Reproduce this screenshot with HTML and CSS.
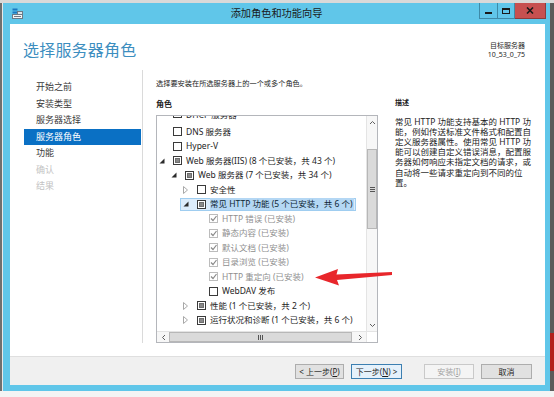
FILE: index.html
```html
<!DOCTYPE html>
<html lang="zh-CN">
<head>
<meta charset="utf-8">
<title>添加角色和功能向导</title>
<link rel="stylesheet" href="styles.css">
</head>
<body>
<div class="desktop">
  <div class="topstrip"></div>
  <div class="winrow">
    <div class="leftedge"></div>
    <div class="window">
      <div class="titlebar">
        <div class="appicon">
          <svg width="11" height="11" viewBox="0 0 11 11">
            <rect x="0.5" y="0.5" width="5" height="2" fill="#1c78c0"/>
            <rect x="0.5" y="3.5" width="5" height="2" fill="#1c78c0"/>
            <rect x="0.5" y="6.5" width="10" height="4" fill="#f4f4f4" stroke="#6b7a86"/>
            <rect x="5.5" y="3.5" width="5" height="3" fill="#e0e6ea" stroke="#6b7a86"/>
            <line x1="2" y1="8.5" x2="9" y2="8.5" stroke="#6b7a86"/>
          </svg>
        </div>
        <div class="wintitle">添加角色和功能向导</div>
        <div class="controls">
          <span class="ctl ctl-min"><svg width="7" height="3"><rect x="0" y="0" width="7" height="2" fill="#1a1a1a"/></svg></span>
          <span class="ctl ctl-max"><svg width="8" height="6"><rect x="0.5" y="0.5" width="7" height="5" fill="none" stroke="#1a1a1a"/><rect x="0" y="0" width="8" height="2" fill="#1a1a1a"/></svg></span>
          <span class="ctl ctl-close"><svg width="8" height="7"><path d="M1 0.5 L7 6.5 M7 0.5 L1 6.5" stroke="#1a1a1a" stroke-width="1.6"/></svg></span>
        </div>
      </div>
      <div class="client">
        <header class="head">
          <h1 class="pagetitle">选择服务器角色</h1>
          <div class="target">
            <div class="target-label">目标服务器</div>
            <div class="target-name">10_53_0_75</div>
          </div>
        </header>
        <div class="main">
          <nav class="steps">
            <div class="step">开始之前</div>
            <div class="step">安装类型</div>
            <div class="step">服务器选择</div>
            <div class="step active">服务器角色</div>
            <div class="step">功能</div>
            <div class="step disabled">确认</div>
            <div class="step disabled">结果</div>
          </nav>
          <section class="content">
            <div class="rolescol">
              <p class="instr">选择要安装在所选服务器上的一个或多个角色。</p>
              <h2 class="label">角色</h2>
              <div class="tree">
                <div class="treeview">
                  <div class="rows">
                    <div class="row l0"><span class="exp"></span><span class="cb"></span><span class="txt">DHCP 服务器</span></div>
                    <div class="row l0"><span class="exp"></span><span class="cb"></span><span class="txt">DNS 服务器</span></div>
                    <div class="row l0"><span class="exp"></span><span class="cb"></span><span class="txt">Hyper-V</span></div>
                    <div class="row l0"><span class="exp"><svg width="6" height="6"><path d="M5.5 0.5 V5.5 H0.5 Z" fill="#2b2b2b"/></svg></span><span class="cb partial"></span><span class="txt">Web 服务器(IIS) (8 个已安装，共 43 个)</span></div>
                    <div class="row l1"><span class="exp"><svg width="6" height="6"><path d="M5.5 0.5 V5.5 H0.5 Z" fill="#2b2b2b"/></svg></span><span class="cb partial"></span><span class="txt">Web 服务器 (7 个已安装，共 34 个)</span></div>
                    <div class="row l2"><span class="exp"><svg width="5" height="8"><path d="M0.5 0.5 L4.5 4 L0.5 7.5 Z" fill="none" stroke="#a8a8a8"/></svg></span><span class="cb"></span><span class="txt">安全性</span></div>
                    <div class="row l2"><span class="sel"><span class="exp"><svg width="6" height="6"><path d="M5.5 0.5 V5.5 H0.5 Z" fill="#2b2b2b"/></svg></span><span class="cb partial"></span><span class="txt seltxt">常见 HTTP 功能 (5 个已安装，共 6 个)</span></span></div>
                    <div class="row l3"><span class="exp"></span><span class="cb done"><svg width="7" height="7"><path d="M1 3.5 L3 5.5 L6.5 1" fill="none" stroke="#8a8a8a" stroke-width="1.2"/></svg></span><span class="txt inst">HTTP 错误 (已安装)</span></div>
                    <div class="row l3"><span class="exp"></span><span class="cb done"><svg width="7" height="7"><path d="M1 3.5 L3 5.5 L6.5 1" fill="none" stroke="#8a8a8a" stroke-width="1.2"/></svg></span><span class="txt inst">静态内容 (已安装)</span></div>
                    <div class="row l3"><span class="exp"></span><span class="cb done"><svg width="7" height="7"><path d="M1 3.5 L3 5.5 L6.5 1" fill="none" stroke="#8a8a8a" stroke-width="1.2"/></svg></span><span class="txt inst">默认文档 (已安装)</span></div>
                    <div class="row l3"><span class="exp"></span><span class="cb done"><svg width="7" height="7"><path d="M1 3.5 L3 5.5 L6.5 1" fill="none" stroke="#8a8a8a" stroke-width="1.2"/></svg></span><span class="txt inst">目录浏览 (已安装)</span></div>
                    <div class="row l3"><span class="exp"></span><span class="cb done"><svg width="7" height="7"><path d="M1 3.5 L3 5.5 L6.5 1" fill="none" stroke="#8a8a8a" stroke-width="1.2"/></svg></span><span class="txt inst">HTTP 重定向 (已安装)</span></div>
                    <div class="row l3"><span class="exp"></span><span class="cb"></span><span class="txt">WebDAV 发布</span></div>
                    <div class="row l2"><span class="exp"><svg width="5" height="8"><path d="M0.5 0.5 L4.5 4 L0.5 7.5 Z" fill="none" stroke="#a8a8a8"/></svg></span><span class="cb partial"></span><span class="txt">性能 (1 个已安装，共 2 个)</span></div>
                    <div class="row l2"><span class="exp"><svg width="5" height="8"><path d="M0.5 0.5 L4.5 4 L0.5 7.5 Z" fill="none" stroke="#a8a8a8"/></svg></span><span class="cb partial"></span><span class="txt">运行状况和诊断 (1 个已安装，共 6 个)</span></div>
                  </div>
                </div>
                <div class="vscroll">
                  <span class="sarrow"><svg width="7" height="5"><path d="M1 4 L3.5 1.5 L6 4" fill="none" stroke="#606060"/></svg></span>
                  <span class="vtrack-top"></span>
                  <span class="vthumb"><svg width="5" height="5"><path d="M0 0.5 H5 M0 2.5 H5 M0 4.5 H5" stroke="#555"/></svg></span>
                  <span class="vtrack-bot"></span>
                  <span class="sarrow"><svg width="7" height="5"><path d="M1 1 L3.5 3.5 L6 1" fill="none" stroke="#606060"/></svg></span>
                </div>
                <div class="hscroll">
                  <span class="harrow"><svg width="5" height="7"><path d="M4 1 L1.5 3.5 L4 6" fill="none" stroke="#606060"/></svg></span>
                  <span class="hthumb"><svg width="5" height="5"><path d="M0.5 0 V5 M2.5 0 V5 M4.5 0 V5" stroke="#555"/></svg></span>
                  <span class="harrow"><svg width="5" height="7"><path d="M1 1 L3.5 3.5 L1 6" fill="none" stroke="#606060"/></svg></span>
                </div>
                <div class="corner"></div>
              </div>
            </div>
            <aside class="desc">
              <h3 class="desc-title">描述</h3>
              <p class="desc-text">常见 HTTP 功能支持基本的 HTTP 功<br>能，例如传送标准文件格式和配置自<br>定义服务器属性。使用常见 HTTP 功<br>能可以创建自定义错误消息，配置服<br>务器如何响应未指定文档的请求，或<br>自动将一些请求重定向到不同的位<br>置。</p>
            </aside>
            <svg class="redarrow" width="80" height="22" viewBox="0 0 80 22">
              <path d="M2 12.5 L25 4 L23.5 9.6 L79 7 L79 10 L24 15 L26 20.5 Z" fill="#e8262b"/>
            </svg>
          </section>
        </div>
        <footer class="foot">
          <button class="btn w49">&lt; 上一步(<u>P</u>)</button>
          <button class="btn primary w51">下一步(<u>N</u>) &gt;</button>
          <button class="btn disabled install w50">安装(<u>I</u>)</button>
          <button class="btn w51">取消</button>
        </footer>
      </div>
    </div>
    <div class="rightedge"></div>
  </div>
</div>
</body>
</html>
```
FILE: styles.css
```css
* { box-sizing: border-box; }
html, body { margin: 0; padding: 0; }
body {
  width: 554px;
  height: 397px;
  overflow: hidden;
  background: #f4f4f4;
  font-family: "Noto Sans", "Noto Sans CJK SC", sans-serif;
  color: #1e1e1e;
}
.desktop { display: flex; flex-direction: column; height: 397px; }
.topstrip { height: 3px; flex: none; background: #d9d9d9; }
.winrow { display: flex; flex: none; }
.leftedge {
  width: 3px;
  background: linear-gradient(to right, #6f6f6f 0 2px, #e8e8e8 2px);
}
.rightedge {
  width: 4px;
  background: linear-gradient(to bottom, #5b5b5b 0 330px, #b3201c 330px 368px, #5b5b5b 368px);
}
.window {
  width: 547px;
  height: 388px;
  background: #60c6e9;
  display: flex;
  flex-direction: column;
}

/* title bar */
.titlebar {
  height: 21px;
  flex: none;
  display: grid;
  grid-template-columns: 1fr auto 1fr;
  align-items: start;
}
.appicon { padding: 5px 0 0 9px; height: 21px; }
.appicon svg { display: block; }
.wintitle {
  font-size: 10.2px;
  line-height: 21px;
  color: #1a1a1a;
  white-space: nowrap;
}
.controls {
  justify-self: end;
  margin-right: 4px;
  display: flex;
  height: 16px;
}
.ctl {
  height: 16px;
  display: flex;
  align-items: center;
  justify-content: center;
  border: 1px solid #3e8aa8;
  border-top: none;
}
.ctl-min { width: 18px; border-right: none; }
.ctl-min svg { margin-top: 5px; }
.ctl-max { width: 18px; }
.ctl-close { width: 31px; background: #c75050; border-color: #8d3a3a; border-left: none; }

/* client area */
.client {
  flex: 1;
  margin: 0 5px 6px 7px;
  background: #ffffff;
  display: flex;
  flex-direction: column;
}
.head {
  height: 46px;
  flex: none;
  display: flex;
  justify-content: space-between;
  align-items: flex-start;
  padding: 16px 20px 0 13px;
}
.pagetitle {
  margin: 0;
  font-size: 16px;
  line-height: 20px;
  font-weight: normal;
  color: #3d8ebf;
  letter-spacing: 0.2px;
}
.target { text-align: right; font-size: 7px; line-height: 9px; color: #1e1e1e; margin-top: 0.5px; }

.main { height: 286px; flex: none; display: flex; }
.steps {
  width: 133px;
  height: 273px;
  flex: none;
  border-right: 1px solid #dadada;
  padding: 9px 1px 0 14px;
}
.step {
  height: 16.5px;
  line-height: 16.5px;
  padding-left: 12px;
  font-size: 9px;
  color: #3a3a3a;
  white-space: nowrap;
}
.step.active { background: #0a70c4; color: #ffffff; }
.step.disabled { color: #c3c3c3; }

.content {
  position: relative;
  flex: 1;
  display: flex;
  padding-left: 13px;
}
.rolescol { width: 222px; flex: none; }
.instr {
  margin: 7px 0 0;
  font-size: 7.2px;
  line-height: 12px;
  color: #222;
  white-space: nowrap;
}
.label {
  margin: 9px 0 0;
  font-size: 8px;
  line-height: 12px;
  font-weight: bold;
  color: #1e1e1e;
}

/* tree */
.tree {
  margin-top: 5px;
  width: 222px;
  height: 228px;
  border: 1px solid #b4b6bb;
  display: grid;
  grid-template-columns: 1fr 11px;
  grid-template-rows: 1fr 11px;
  background: #fff;
}
.treeview { overflow: hidden; }
.rows { margin-top: -7px; }
.row {
  height: 14.5px;
  display: flex;
  align-items: center;
  font-size: 8.5px;
  white-space: nowrap;
  color: #1e1e1e;
}
.row:first-child { height: 15.5px; align-items: flex-start; }
.row.l1 { padding-left: 12px; }
.row.l2 { padding-left: 24px; }
.row.l3 { padding-left: 36px; }
.exp {
  width: 16px;
  flex: none;
  display: flex;
  align-items: center;
  padding-left: 2px;
}
.exp svg { display: block; }
.cb {
  width: 9px;
  height: 9px;
  flex: none;
  border: 1px solid #3a3a3a;
  background: #fff;
  margin-right: 4px;
  display: inline-flex;
  align-items: center;
  justify-content: center;
}
.cb.partial::before {
  content: "";
  width: 5px;
  height: 5px;
  background: #8a8a8a;
  box-shadow: inset 0 0 0 1px #6e6e6e;
}
.cb.done { border-color: #bcbcbc; }
.cb svg { display: block; }
.txt { line-height: 12px; }
.txt.inst { color: #8f8f8f; }
.sel {
  display: flex;
  align-items: center;
  height: 13px;
  background: #dcecfb;
  border: 1px solid #9fcdf0;
  margin-left: -1px;
  padding-right: 1px;
}
.seltxt { background: #b4d7f4; color: #0d1f33; padding-right: 1px; }

.vscroll {
  display: flex;
  flex-direction: column;
  background: #f7f7f7;
  border-left: 1px solid #e4e4e4;
}
.sarrow { height: 12px; flex: none; display: flex; align-items: center; justify-content: center; }
.vtrack-top { height: 21px; flex: none; }
.vthumb {
  height: 80px;
  flex: none;
  background: #dadada;
  border: 1px solid #b7b7b7;
  display: flex;
  align-items: center;
  justify-content: center;
}
.vtrack-bot { flex: 1; }
.hscroll {
  display: flex;
  background: #f7f7f7;
  border-top: 1px solid #e4e4e4;
}
.harrow { width: 12px; flex: none; display: flex; align-items: center; justify-content: center; }
.hthumb {
  flex: 1;
  background: #dadada;
  border: 1px solid #b7b7b7;
  margin-right: 2px;
  display: flex;
  align-items: center;
  justify-content: center;
}
.corner { background: #fff; border-top: 1px solid #e4e4e4; border-left: 1px solid #e4e4e4; }

/* description */
.desc { margin-left: 17px; padding-top: 27px; width: 140px; }
.desc-title {
  margin: 0;
  font-size: 7px;
  line-height: 12px;
  font-weight: bold;
}
.desc-text {
  margin: 7.5px 0 0;
  font-size: 8.5px;
  line-height: 10.2px;
  color: #222;
  white-space: nowrap;
}

.redarrow { position: absolute; left: 170px; top: 195px; }

/* footer */
.foot {
  height: 29px;
  flex: none;
  background: #f0f0f0;
  border-top: 1px solid #dfdfdf;
  display: flex;
  align-items: center;
  justify-content: flex-end;
  gap: 7px;
  padding: 0 13px 0 0;
}
.btn {
  height: 15px;
  padding: 0;
  border: 1px solid #adadad;
  background: #e1e1e1;
  font-family: "Noto Sans", "Noto Sans CJK SC", sans-serif;
  font-size: 8px;
  line-height: 13px;
  color: #1e1e1e;
  white-space: nowrap;
}
.btn.primary { border-color: #3c7fb1; background: #e5f1fb; }
.btn.disabled { border-color: #c9c9c9; background: #f4f4f4; color: #a3a3a3; }
.btn.install { margin-left: 15px; }
.w49 { width: 49px; }
.w50 { width: 50px; }
.w51 { width: 51px; }
```
